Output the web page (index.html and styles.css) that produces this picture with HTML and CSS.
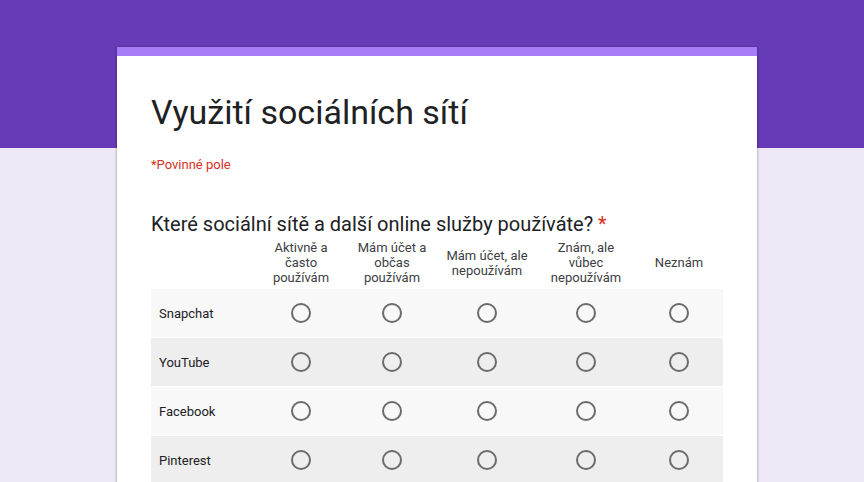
FILE: index.html
```html
<!DOCTYPE html>
<html lang="cs">
<head>
<meta charset="utf-8">
<title>Využití sociálních sítí</title>
<link rel="stylesheet" href="styles.css">
</head>
<body>
<div class="page">
<main class="card">
  <h1 class="title">Využití sociálních sítí</h1>
  <p class="required-note">*Povinné pole</p>
  <h2 class="question">Které sociální sítě a další online služby používáte? <span class="star">*</span></h2>
  <div class="grid">
    <div class="head"></div>
    <div class="head">Aktivně a<br>často<br>používám</div>
    <div class="head">Mám účet a<br>občas<br>používám</div>
    <div class="head">Mám účet, ale<br>nepoužívám</div>
    <div class="head">Znám, ale<br>vůbec<br>nepoužívám</div>
    <div class="head">Neznám</div>

    <div class="row odd">
      <div class="label">Snapchat</div>
      <div class="cell"><span class="radio"></span></div>
      <div class="cell"><span class="radio"></span></div>
      <div class="cell"><span class="radio"></span></div>
      <div class="cell"><span class="radio"></span></div>
      <div class="cell"><span class="radio"></span></div>
    </div>
    <div class="row even">
      <div class="label">YouTube</div>
      <div class="cell"><span class="radio"></span></div>
      <div class="cell"><span class="radio"></span></div>
      <div class="cell"><span class="radio"></span></div>
      <div class="cell"><span class="radio"></span></div>
      <div class="cell"><span class="radio"></span></div>
    </div>
    <div class="row odd">
      <div class="label">Facebook</div>
      <div class="cell"><span class="radio"></span></div>
      <div class="cell"><span class="radio"></span></div>
      <div class="cell"><span class="radio"></span></div>
      <div class="cell"><span class="radio"></span></div>
      <div class="cell"><span class="radio"></span></div>
    </div>
    <div class="row even">
      <div class="label">Pinterest</div>
      <div class="cell"><span class="radio"></span></div>
      <div class="cell"><span class="radio"></span></div>
      <div class="cell"><span class="radio"></span></div>
      <div class="cell"><span class="radio"></span></div>
      <div class="cell"><span class="radio"></span></div>
    </div>
  </div>
</main>
</div>
</body>
</html>
```

FILE: styles.css
```css
html, body {
  margin: 0;
  padding: 0;
}
body {
  font-family: Roboto, "Liberation Sans", Arial, sans-serif;
  color: #202124;
  background: linear-gradient(#673ab7 0, #673ab7 148px, #ede7f6 148px);
  min-height: 482px;
  overflow: hidden;
}
.page {
  padding-left: 10px;
}
.card {
  width: 640px;
  box-sizing: border-box;
  margin: 47px auto 0;
  background: #fff;
  border-top: 9px solid #a97cf7;
  box-shadow: 0 1px 3px rgba(0,0,0,0.28), 0 0 2px rgba(0,0,0,0.12);
  padding: 36px 34px 40px;
}
.title {
  margin: 0;
  font-size: 34px;
  font-weight: 400;
  line-height: 40px;
  color: #202124;
}
.required-note {
  margin: 24px 0 0;
  font-size: 13px;
  line-height: 17px;
  color: #d93025;
}
.question {
  margin: 39px 0 0;
  font-size: 20px;
  font-weight: 400;
  line-height: 24px;
  color: #202124;
}
.star {
  color: #d93025;
}
.grid {
  margin-top: 2px;
  display: grid;
  grid-template-columns: 104px 92px 90px 100px 98px 88px;
  row-gap: 1px;
}
.head {
  font-size: 13px;
  line-height: 15px;
  text-align: center;
  color: #3c4043;
  display: flex;
  align-items: center;
  justify-content: center;
  padding: 2px 0 3px;
}
.row {
  display: contents;
}
.row > div {
  height: 48px;
  display: flex;
  align-items: center;
}
.row.odd > div {
  background: #f8f8f8;
}
.row.even > div {
  background: #eeeeee;
}
.label {
  padding-left: 8px;
  font-size: 13px;
  color: #202124;
}
.cell {
  justify-content: center;
}
.radio {
  width: 20px;
  height: 20px;
  box-sizing: border-box;
  border: 2px solid #6b6b6b;
  border-radius: 50%;
}
```
